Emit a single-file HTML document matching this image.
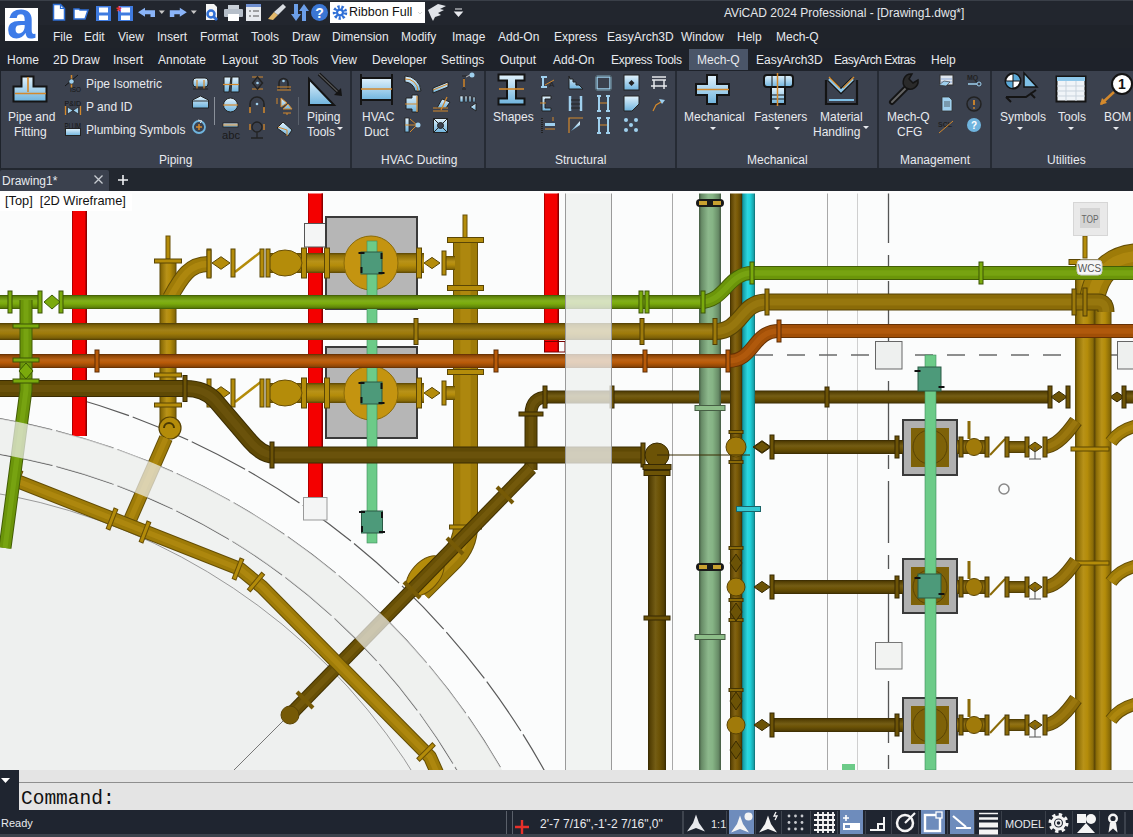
<!DOCTYPE html>
<html><head><meta charset="utf-8">
<style>
*{margin:0;padding:0;box-sizing:border-box}
html,body{width:1133px;height:837px;overflow:hidden;background:#1e232b;font-family:"Liberation Sans",sans-serif}
.a{position:absolute}
.t{position:absolute;white-space:nowrap;color:#e8eaee;font-size:12px;line-height:14px}
#title{left:0;top:0;width:1133px;height:48px;background:linear-gradient(#3a3f48 0,#3a3f48 1px,#22262e 1px,#22262e 25px,#1f232a 25px)}
#tabs{left:0;top:48px;width:1133px;height:23px;background:#1e222a}
#ribbon{left:1px;top:71px;width:1132px;height:97px;background:#3b414e}
.sep{position:absolute;top:71px;height:97px;width:2px;background:#262b34}
.pl{position:absolute;top:153px;color:#e6e8ec;font-size:12px;line-height:14px;white-space:nowrap}
.lbl{position:absolute;color:#eceef2;font-size:12px;line-height:15px;text-align:center;white-space:nowrap}
#doctabs{left:0;top:168px;width:1133px;height:23px;background:#22272f}
#canvas{left:0;top:191px;width:1133px;height:579px;background:#fdfdfd;overflow:hidden}
#cmd{left:19px;top:770px;width:1114px;height:40px;background:#e4e4e4}
#status{left:0;top:810px;width:1133px;height:27px;background:#1f2530}
</style></head><body>
<div id="title" class="a"></div>
<div id="tabs" class="a"></div>
<div id="ribbon" class="a"></div>
<div id="doctabs" class="a"></div>
<div id="canvas" class="a"></div>
<div id="cmd" class="a"></div>
<div id="status" class="a"></div>
<!--DRAW--><svg class="a" style="left:0;top:0" width="1133" height="837" viewBox="0 0 1133 837"><defs><linearGradient id="g0" x1="0" y1="0" x2="1" y2="0"><stop offset="0" stop-color="#5a4605"/><stop offset="0.12" stop-color="#8c6d07"/><stop offset="0.42" stop-color="#b89218"/><stop offset="0.62" stop-color="#b48c0a"/><stop offset="0.88" stop-color="#8c6d07"/><stop offset="1" stop-color="#5a4605"/></linearGradient><linearGradient id="g1" x1="0" y1="0" x2="0" y2="1"><stop offset="0" stop-color="#5a4605"/><stop offset="0.12" stop-color="#8c6d07"/><stop offset="0.42" stop-color="#b89218"/><stop offset="0.62" stop-color="#b48c0a"/><stop offset="0.88" stop-color="#8c6d07"/><stop offset="1" stop-color="#5a4605"/></linearGradient><linearGradient id="g2" x1="0" y1="0" x2="0" y2="1"><stop offset="0" stop-color="#362903"/><stop offset="0.12" stop-color="#544004"/><stop offset="0.42" stop-color="#745d14"/><stop offset="0.62" stop-color="#6c5306"/><stop offset="0.88" stop-color="#544004"/><stop offset="1" stop-color="#362903"/></linearGradient><linearGradient id="g3" x1="0" y1="0" x2="1" y2="0"><stop offset="0" stop-color="#435a42"/><stop offset="0.12" stop-color="#688c67"/><stop offset="0.42" stop-color="#8db88c"/><stop offset="0.62" stop-color="#86b485"/><stop offset="0.88" stop-color="#688c67"/><stop offset="1" stop-color="#435a42"/></linearGradient><linearGradient id="g4" x1="0" y1="0" x2="1" y2="0"><stop offset="0" stop-color="#3d2d03"/><stop offset="0.12" stop-color="#5f4604"/><stop offset="0.42" stop-color="#816314"/><stop offset="0.62" stop-color="#7a5a06"/><stop offset="0.88" stop-color="#5f4604"/><stop offset="1" stop-color="#3d2d03"/></linearGradient><linearGradient id="g5" x1="0" y1="0" x2="1" y2="0"><stop offset="0" stop-color="#0f696e"/><stop offset="0.12" stop-color="#18a4ab"/><stop offset="0.42" stop-color="#2cd5de"/><stop offset="0.62" stop-color="#1fd3dc"/><stop offset="0.88" stop-color="#18a4ab"/><stop offset="1" stop-color="#0f696e"/></linearGradient><linearGradient id="g6" x1="0" y1="0" x2="1" y2="0"><stop offset="0" stop-color="#362903"/><stop offset="0.12" stop-color="#544004"/><stop offset="0.42" stop-color="#745d14"/><stop offset="0.62" stop-color="#6c5306"/><stop offset="0.88" stop-color="#544004"/><stop offset="1" stop-color="#362903"/></linearGradient><linearGradient id="g7" x1="0" y1="0" x2="0" y2="1"><stop offset="0" stop-color="#453504"/><stop offset="0.12" stop-color="#6b5206"/><stop offset="0.42" stop-color="#917216"/><stop offset="0.62" stop-color="#8a6a08"/><stop offset="0.88" stop-color="#6b5206"/><stop offset="1" stop-color="#453504"/></linearGradient><linearGradient id="g8" x1="0" y1="0" x2="0" y2="1"><stop offset="0" stop-color="#3d5506"/><stop offset="0.12" stop-color="#5f8409"/><stop offset="0.42" stop-color="#81af1a"/><stop offset="0.62" stop-color="#7aaa0c"/><stop offset="0.88" stop-color="#5f8409"/><stop offset="1" stop-color="#3d5506"/></linearGradient><linearGradient id="g9" x1="0" y1="0" x2="0" y2="1"><stop offset="0" stop-color="#4e3d05"/><stop offset="0.12" stop-color="#7a5f07"/><stop offset="0.42" stop-color="#a28118"/><stop offset="0.62" stop-color="#9d7a0a"/><stop offset="0.88" stop-color="#7a5f07"/><stop offset="1" stop-color="#4e3d05"/></linearGradient><linearGradient id="g10" x1="0" y1="0" x2="0" y2="1"><stop offset="0" stop-color="#5c2d04"/><stop offset="0.12" stop-color="#8f4606"/><stop offset="0.42" stop-color="#bc6316"/><stop offset="0.62" stop-color="#b85a08"/><stop offset="0.88" stop-color="#8f4606"/><stop offset="1" stop-color="#5c2d04"/></linearGradient><clipPath id="cv"><rect x="0" y="193.5" width="1133" height="576.5"/></clipPath></defs><g clip-path="url(#cv)"><rect x="0" y="191" width="1133" height="579" fill="#fbfcfc"/><circle cx="-124" cy="1130" r="722" fill="#f0f2f1"/><circle cx="-110" cy="1102" r="618" fill="#eef0ef"/><g fill="none" stroke="#5a5a5a" stroke-width="1.2" stroke-dasharray="60 4"><circle cx="-140" cy="1151" r="783"/><circle cx="-124" cy="1130" r="722"/><circle cx="-110" cy="1102" r="657"/></g><circle cx="-110" cy="1102" r="618" fill="none" stroke="#9a9a9a" stroke-width="1"/><path d="M289 715L232 772" stroke="#777" stroke-width="1"/><path d="M672.5 191V770M827.5 191V770" stroke="#a8a8a8" stroke-width="1"/><path d="M857.5 191V770" stroke="#cfcfcf" stroke-width="1"/><path d="M888.5 191V770" stroke="#555" stroke-width="1.3" stroke-dasharray="62 12 14 12" stroke-dashoffset="10"/><path d="M755 355H1133" stroke="#6a6a6a" stroke-width="1.5" stroke-dasharray="18 14"/><rect x="875.5" y="341.5" width="26.5" height="27.5" fill="#eef0ef" stroke="#666" stroke-width="1.0"/><rect x="875.5" y="642.5" width="26.5" height="26.5" fill="#f2f3f2" stroke="#777" stroke-width="1.0"/><rect x="1117.5" y="341.5" width="22.5" height="27.5" fill="#eef0ef" stroke="#666" stroke-width="1.0"/><rect x="72.0" y="211.0" width="15.0" height="225.0" fill="#f40000"/><rect x="85.5" y="211.0" width="1.5" height="225.0" fill="#8a0000"/><rect x="72.0" y="211.0" width="1.0" height="225.0" fill="#b00000"/><rect x="308.0" y="191.0" width="15.0" height="306.0" fill="#f40000"/><rect x="321.5" y="191.0" width="1.5" height="306.0" fill="#8a0000"/><rect x="308.0" y="191.0" width="1.0" height="306.0" fill="#b00000"/><rect x="544.0" y="191.0" width="15.0" height="161.0" fill="#f40000"/><rect x="557.5" y="191.0" width="1.5" height="161.0" fill="#8a0000"/><rect x="544.0" y="191.0" width="1.0" height="161.0" fill="#b00000"/><rect x="544.5" y="341.5" width="20.5" height="10.5" fill="none" stroke="#700" stroke-width="1.0"/><rect x="304.5" y="223.5" width="21.5" height="23.5" fill="#f4f5f5" stroke="#555" stroke-width="1.0"/><rect x="303.5" y="497.5" width="23.5" height="22.5" fill="#f4f5f5" stroke="#999" stroke-width="1.0"/><rect x="326.0" y="217.0" width="91.0" height="92.0" fill="#b6b6b6" stroke="#3a3a3a" stroke-width="2.0"/><rect x="326.0" y="347.0" width="91.0" height="91.0" fill="#b6b6b6" stroke="#3a3a3a" stroke-width="2.0"/><rect x="159.5" y="262.0" width="17.0" height="163.0" fill="url(#g0)"/><rect x="166.0" y="236.0" width="4.0" height="23.0" fill="#b48c0a" stroke="#6a5006" stroke-width="1.0"/><rect x="154.5" y="259.0" width="27.0" height="4.0" fill="#b48c0a" stroke="#5a4605" stroke-width="1"/><rect x="154.5" y="373.0" width="27.0" height="4.0" fill="#b48c0a" stroke="#5a4605" stroke-width="1"/><rect x="154.5" y="403.0" width="27.0" height="4.0" fill="#b48c0a" stroke="#5a4605" stroke-width="1"/><circle cx="170" cy="428" r="11" fill="#b48c0a" stroke="#5a4404" stroke-width="1.2"/><path d="M164 428a5 5 0 1 1 10 0" fill="none" stroke="#4a3a04" stroke-width="2"/><path d="M166.0 438.0 L127.0 527.0" fill="none" stroke="#634d05" stroke-width="14.0" stroke-linejoin="round" stroke-linecap="butt"/><path d="M166.0 438.0 L127.0 527.0" fill="none" stroke="#9e7b08" stroke-width="12.0" stroke-linejoin="round" stroke-linecap="butt"/><path d="M166.0 438.0 L127.0 527.0" fill="none" stroke="#b79013" stroke-width="5.4" stroke-linejoin="round" stroke-linecap="butt" opacity=".6"/><path d="M465.5 240 L465.5 526 Q465.5 544 452 558 L420 590" fill="none" stroke="#634d05" stroke-width="25.0" stroke-linejoin="round" stroke-linecap="butt"/><path d="M465.5 240 L465.5 526 Q465.5 544 452 558 L420 590" fill="none" stroke="#9e7b08" stroke-width="23.0" stroke-linejoin="round" stroke-linecap="butt"/><path d="M465.5 240 L465.5 526 Q465.5 544 452 558 L420 590" fill="none" stroke="#b79013" stroke-width="10.3" stroke-linejoin="round" stroke-linecap="butt" opacity=".6"/><ellipse cx="425" cy="576" rx="24" ry="14" fill="#b48c0a" stroke="#6a5006" transform="rotate(-48 425 576)"/><rect x="463.0" y="215.0" width="4.0" height="23.0" fill="#b48c0a" stroke="#6a5006" stroke-width="1.0"/><rect x="447.5" y="237.5" width="36.0" height="5.0" fill="#b48c0a" stroke="#5a4605" stroke-width="1"/><rect x="447.5" y="285.5" width="36.0" height="5.0" fill="#b48c0a" stroke="#5a4605" stroke-width="1"/><rect x="447.5" y="369.5" width="36.0" height="5.0" fill="#b48c0a" stroke="#5a4605" stroke-width="1"/><rect x="449.5" y="525.0" width="32.0" height="4.0" fill="#b48c0a" stroke="#5a4605" stroke-width="1"/><rect x="268.0" y="253.0" width="156.0" height="20.0" fill="url(#g1)"/><rect x="444.0" y="256.0" width="11.0" height="14.0" fill="url(#g1)"/><rect x="301.5" y="248.0" width="5.0" height="30.0" fill="#b48c0a" stroke="#5a4605" stroke-width="1"/><rect x="324.5" y="248.0" width="5.0" height="30.0" fill="#b48c0a" stroke="#5a4605" stroke-width="1"/><rect x="416.5" y="248.0" width="5.0" height="30.0" fill="#b48c0a" stroke="#5a4605" stroke-width="1"/><ellipse cx="285" cy="263" rx="17" ry="13" fill="#b48c0a" stroke="#6a5006" stroke-width="1"/><rect x="266.0" y="249.0" width="4.0" height="28.0" fill="#b48c0a" stroke="#5a4605" stroke-width="1"/><path d="M235 272 L262 251" stroke="#b48c0a" stroke-width="2.5"/><rect x="231.0" y="249.0" width="4.0" height="28.0" fill="#b48c0a" stroke="#5a4605" stroke-width="1"/><rect x="260.0" y="249.0" width="4.0" height="28.0" fill="#b48c0a" stroke="#5a4605" stroke-width="1"/><path d="M212.0 263.0l9.0 -6.3l9.0 6.3l-9.0 6.3z" fill="#b48c0a" stroke="#5a4605" stroke-width="1"/><rect x="207.0" y="249.0" width="4.0" height="28.0" fill="#b48c0a" stroke="#5a4605" stroke-width="1"/><path d="M424.0 263.0l8.0 -5.6l8.0 5.6l-8.0 5.6z" fill="#b48c0a" stroke="#5a4605" stroke-width="1"/><rect x="442.0" y="251.0" width="4.0" height="24.0" fill="#b48c0a" stroke="#5a4605" stroke-width="1"/><circle cx="371" cy="263" r="27" fill="#c49410" stroke="#8a6a08" stroke-width="1"/><rect x="268.0" y="383.0" width="156.0" height="20.0" fill="url(#g1)"/><rect x="444.0" y="386.0" width="11.0" height="14.0" fill="url(#g1)"/><rect x="301.5" y="378.0" width="5.0" height="30.0" fill="#b48c0a" stroke="#5a4605" stroke-width="1"/><rect x="324.5" y="378.0" width="5.0" height="30.0" fill="#b48c0a" stroke="#5a4605" stroke-width="1"/><rect x="416.5" y="378.0" width="5.0" height="30.0" fill="#b48c0a" stroke="#5a4605" stroke-width="1"/><ellipse cx="285" cy="393" rx="17" ry="13" fill="#b48c0a" stroke="#6a5006" stroke-width="1"/><rect x="266.0" y="379.0" width="4.0" height="28.0" fill="#b48c0a" stroke="#5a4605" stroke-width="1"/><path d="M235 402 L262 381" stroke="#b48c0a" stroke-width="2.5"/><rect x="231.0" y="379.0" width="4.0" height="28.0" fill="#b48c0a" stroke="#5a4605" stroke-width="1"/><rect x="260.0" y="379.0" width="4.0" height="28.0" fill="#b48c0a" stroke="#5a4605" stroke-width="1"/><path d="M212.0 393.0l9.0 -6.3l9.0 6.3l-9.0 6.3z" fill="#b48c0a" stroke="#5a4605" stroke-width="1"/><rect x="207.0" y="379.0" width="4.0" height="28.0" fill="#b48c0a" stroke="#5a4605" stroke-width="1"/><path d="M424.0 393.0l8.0 -5.6l8.0 5.6l-8.0 5.6z" fill="#b48c0a" stroke="#5a4605" stroke-width="1"/><rect x="442.0" y="381.0" width="4.0" height="24.0" fill="#b48c0a" stroke="#5a4605" stroke-width="1"/><circle cx="371" cy="393" r="27" fill="#c49410" stroke="#8a6a08" stroke-width="1"/><path d="M170 298 C182 276 190 264 208 264" fill="none" stroke="#634d05" stroke-width="16.0" stroke-linejoin="round" stroke-linecap="butt"/><path d="M170 298 C182 276 190 264 208 264" fill="none" stroke="#9e7b08" stroke-width="14.0" stroke-linejoin="round" stroke-linecap="butt"/><path d="M170 298 C182 276 190 264 208 264" fill="none" stroke="#b79013" stroke-width="6.3" stroke-linejoin="round" stroke-linecap="butt" opacity=".6"/><rect x="207.0" y="250.0" width="4.0" height="28.0" fill="#b48c0a" stroke="#5a4605" stroke-width="1"/><rect x="367.0" y="241.0" width="10.0" height="302.0" fill="#6ccb88" stroke="#3f8a5a" stroke-width="0.6"/><rect x="361.0" y="252.0" width="21.0" height="22.0" fill="#4d9a7a" stroke="#2a5a44" stroke-width="1.0"/><path d="M358.5 253.0h6M378.5 273.0h6M361.5 267.0v6M381.5 253.0v6" stroke="#111" stroke-width="2"/><rect x="361.0" y="382.0" width="21.0" height="22.0" fill="#4d9a7a" stroke="#2a5a44" stroke-width="1.0"/><path d="M358.5 383.0h6M378.5 403.0h6M361.5 397.0v6M381.5 383.0v6" stroke="#111" stroke-width="2"/><rect x="361.5" y="511.0" width="21.0" height="22.0" fill="#4d9a7a" stroke="#2a5a44" stroke-width="1.0"/><path d="M359.0 512.0h6M379.0 532.0h6M362.0 526.0v6M382.0 512.0v6" stroke="#111" stroke-width="2"/><rect x="545.0" y="390.5" width="505.0" height="13.0" fill="url(#g2)"/><path d="M548 397 Q531 397 531 414 L531 470" fill="none" stroke="#3b2d03" stroke-width="13.0" stroke-linejoin="round" stroke-linecap="butt"/><path d="M548 397 Q531 397 531 414 L531 470" fill="none" stroke="#5f4905" stroke-width="11.0" stroke-linejoin="round" stroke-linecap="butt"/><path d="M548 397 Q531 397 531 414 L531 470" fill="none" stroke="#71590f" stroke-width="5.0" stroke-linejoin="round" stroke-linecap="butt" opacity=".6"/><rect x="543.0" y="386.0" width="4.0" height="22.0" fill="#6c5306" stroke="#362903" stroke-width="1"/><rect x="519.0" y="412.0" width="24.0" height="4.0" fill="#6c5306" stroke="#362903" stroke-width="1"/><rect x="610.0" y="386.0" width="4.0" height="22.0" fill="#6c5306" stroke="#362903" stroke-width="1"/><rect x="1048.0" y="386.0" width="4.0" height="22.0" fill="#6c5306" stroke="#362903" stroke-width="1"/><path d="M1051.0 397.0l8.0 -5.6l8.0 5.6l-8.0 5.6z" fill="#6c5306" stroke="#362903" stroke-width="1"/><rect x="1066.0" y="386.0" width="4.0" height="22.0" fill="#6c5306" stroke="#362903" stroke-width="1"/><path d="M1110.0 397.0l7.0 -4.9l7.0 4.9l-7.0 4.9z" fill="#6c5306" stroke="#362903" stroke-width="1"/><rect x="1124.0" y="390.5" width="9.0" height="13.0" fill="url(#g2)"/><rect x="1122.0" y="386.0" width="4.0" height="22.0" fill="#6c5306" stroke="#362903" stroke-width="1"/><rect x="825.0" y="387.0" width="4.0" height="20.0" fill="#6c5306" stroke="#362903" stroke-width="1"/><rect x="699.0" y="191.0" width="22.0" height="579.0" fill="url(#g3)"/><rect x="696" y="199" width="28" height="8" rx="4" fill="#1a1a1a"/><rect x="699" y="201" width="8" height="4" fill="#c8a030"/><rect x="713" y="201" width="8" height="4" fill="#c8a030"/><rect x="695.0" y="405.5" width="30.0" height="5.0" fill="#8dbd88" stroke="#465e44" stroke-width="1"/><rect x="695.0" y="634.5" width="30.0" height="5.0" fill="#8dbd88" stroke="#465e44" stroke-width="1"/><rect x="696" y="563" width="28" height="8" rx="4" fill="#1a1a1a"/><rect x="699" y="565" width="8" height="4" fill="#c8a030"/><rect x="713" y="565" width="8" height="4" fill="#c8a030"/><rect x="730.0" y="191.0" width="12.0" height="579.0" fill="url(#g4)"/><rect x="742.0" y="191.0" width="13.0" height="579.0" fill="url(#g5)"/><rect x="736.5" y="506.5" width="24.0" height="5.0" fill="#35c8d0" stroke="#1a6468" stroke-width="1"/><circle cx="736" cy="447" r="10" fill="#a07a0a" stroke="#5a4404"/><rect x="729.0" y="430.5" width="14.0" height="3.0" fill="#8a6a08" stroke="#453504" stroke-width="1"/><rect x="729.0" y="460.5" width="14.0" height="3.0" fill="#8a6a08" stroke="#453504" stroke-width="1"/><rect x="729.0" y="546.5" width="14.0" height="3.0" fill="#8a6a08" stroke="#453504" stroke-width="1"/><rect x="729.0" y="598.5" width="14.0" height="3.0" fill="#8a6a08" stroke="#453504" stroke-width="1"/><rect x="729.0" y="618.5" width="14.0" height="3.0" fill="#8a6a08" stroke="#453504" stroke-width="1"/><rect x="729.0" y="688.5" width="14.0" height="3.0" fill="#8a6a08" stroke="#453504" stroke-width="1"/><path d="M753.0 447.0l9.0 -6.3l9.0 6.3l-9.0 6.3z" fill="#765a06" stroke="#3b2d03" stroke-width="1"/><circle cx="736" cy="587" r="9" fill="#a07a0a" stroke="#5a4404"/><path d="M736 554l6 9-6 9-6-9z" fill="#6c5306" stroke="#3a2c02"/><path d="M736 603l6 9-6 9-6-9z" fill="#6c5306" stroke="#3a2c02"/><circle cx="736" cy="725" r="9" fill="#a07a0a" stroke="#5a4404"/><path d="M736 692l6 9-6 9-6-9z" fill="#6c5306" stroke="#3a2c02"/><path d="M736 741l6 9-6 9-6-9z" fill="#6c5306" stroke="#3a2c02"/><rect x="648.0" y="462.0" width="18.0" height="308.0" fill="url(#g6)"/><rect x="644.0" y="470.5" width="26.0" height="5.0" fill="#6c5306" stroke="#362903" stroke-width="1"/><rect x="644.0" y="616.0" width="26.0" height="4.0" fill="#6c5306" stroke="#362903" stroke-width="1"/><rect x="1075.0" y="260.0" width="20.0" height="510.0" fill="url(#g0)"/><rect x="1094.5" y="300.0" width="17.0" height="470.0" fill="url(#g0)"/><rect x="1083.0" y="236.0" width="4.0" height="22.0" fill="#b48c0a" stroke="#6a5006" stroke-width="1.0"/><rect x="1069.0" y="259.5" width="32.0" height="5.0" fill="#b48c0a" stroke="#5a4605" stroke-width="1"/><rect x="1071.0" y="447.0" width="38.0" height="4.0" fill="#b48c0a" stroke="#5a4605" stroke-width="1"/><rect x="1071.0" y="561.0" width="38.0" height="4.0" fill="#b48c0a" stroke="#5a4605" stroke-width="1"/><path d="M1092 300 Q1098 258 1140 256" fill="none" stroke="#634d05" stroke-width="26.0" stroke-linejoin="round" stroke-linecap="butt"/><path d="M1092 300 Q1098 258 1140 256" fill="none" stroke="#9e7b08" stroke-width="24.0" stroke-linejoin="round" stroke-linecap="butt"/><path d="M1092 300 Q1098 258 1140 256" fill="none" stroke="#b79013" stroke-width="10.8" stroke-linejoin="round" stroke-linecap="butt" opacity=".6"/><rect x="903.0" y="420.0" width="54.0" height="55.0" fill="#b0b0b0" stroke="#3a3a3a" stroke-width="2.0"/><rect x="911.0" y="428.0" width="38.0" height="39.0" fill="#7e6208"/><circle cx="930" cy="447" r="17" fill="none" stroke="#5a4404" stroke-width="1"/><rect x="771.0" y="440.0" width="132.0" height="14.0" fill="url(#g2)"/><rect x="770.0" y="435.0" width="4.0" height="24.0" fill="#6c5306" stroke="#362903" stroke-width="1"/><rect x="895.0" y="436.0" width="4.0" height="22.0" fill="#6c5306" stroke="#362903" stroke-width="1"/><path d="M754.0 447.0l8.0 -5.6l8.0 5.6l-8.0 5.6z" fill="#6c5306" stroke="#362903" stroke-width="1"/><rect x="957.0" y="440.0" width="30.0" height="14.0" fill="url(#g7)"/><rect x="959.0" y="437.0" width="4.0" height="20.0" fill="#8a6a08" stroke="#453504" stroke-width="1"/><rect x="967.5" y="421.0" width="3.0" height="18.0" fill="#8a6a08"/><circle cx="974" cy="447" r="8.5" fill="#a07a0a" stroke="#5a4404"/><rect x="985.0" y="437.0" width="4.0" height="20.0" fill="#8a6a08" stroke="#453504" stroke-width="1"/><path d="M990 455 L1005 439" stroke="#8a6a08" stroke-width="2"/><rect x="1007.0" y="441.0" width="20.0" height="12.0" fill="url(#g7)"/><rect x="1005.0" y="437.0" width="4.0" height="20.0" fill="#8a6a08" stroke="#453504" stroke-width="1"/><rect x="1025.0" y="437.0" width="4.0" height="20.0" fill="#8a6a08" stroke="#453504" stroke-width="1"/><path d="M1028.0 447.0l7.0 -4.9l7.0 4.9l-7.0 4.9z" fill="#8a6a08" stroke="#453504" stroke-width="1"/><path d="M1035 447v12M1029 459h12" stroke="#555" stroke-width="1"/><path d="M1044 447 Q1058 447 1076 421" fill="none" stroke="#584305" stroke-width="14.0" stroke-linejoin="round" stroke-linecap="butt"/><path d="M1044 447 Q1058 447 1076 421" fill="none" stroke="#8c6b08" stroke-width="12.0" stroke-linejoin="round" stroke-linecap="butt"/><path d="M1044 447 Q1058 447 1076 421" fill="none" stroke="#a37f13" stroke-width="5.4" stroke-linejoin="round" stroke-linecap="butt" opacity=".6"/><rect x="1043.0" y="437.0" width="4.0" height="20.0" fill="#8a6a08" stroke="#453504" stroke-width="1"/><rect x="903.0" y="559.0" width="54.0" height="54.0" fill="#b0b0b0" stroke="#3a3a3a" stroke-width="2.0"/><rect x="911.0" y="567.0" width="38.0" height="38.0" fill="#7e6208"/><circle cx="930" cy="587" r="17" fill="none" stroke="#5a4404" stroke-width="1"/><rect x="771.0" y="580.0" width="132.0" height="14.0" fill="url(#g2)"/><rect x="770.0" y="575.0" width="4.0" height="24.0" fill="#6c5306" stroke="#362903" stroke-width="1"/><rect x="895.0" y="576.0" width="4.0" height="22.0" fill="#6c5306" stroke="#362903" stroke-width="1"/><path d="M754.0 587.0l8.0 -5.6l8.0 5.6l-8.0 5.6z" fill="#6c5306" stroke="#362903" stroke-width="1"/><rect x="957.0" y="580.0" width="30.0" height="14.0" fill="url(#g7)"/><rect x="959.0" y="577.0" width="4.0" height="20.0" fill="#8a6a08" stroke="#453504" stroke-width="1"/><rect x="967.5" y="561.0" width="3.0" height="18.0" fill="#8a6a08"/><circle cx="974" cy="587" r="8.5" fill="#a07a0a" stroke="#5a4404"/><rect x="985.0" y="577.0" width="4.0" height="20.0" fill="#8a6a08" stroke="#453504" stroke-width="1"/><path d="M990 595 L1005 579" stroke="#8a6a08" stroke-width="2"/><rect x="1007.0" y="581.0" width="20.0" height="12.0" fill="url(#g7)"/><rect x="1005.0" y="577.0" width="4.0" height="20.0" fill="#8a6a08" stroke="#453504" stroke-width="1"/><rect x="1025.0" y="577.0" width="4.0" height="20.0" fill="#8a6a08" stroke="#453504" stroke-width="1"/><path d="M1028.0 587.0l7.0 -4.9l7.0 4.9l-7.0 4.9z" fill="#8a6a08" stroke="#453504" stroke-width="1"/><path d="M1035 587v12M1029 599h12" stroke="#555" stroke-width="1"/><path d="M1044 587 Q1058 587 1076 561" fill="none" stroke="#584305" stroke-width="14.0" stroke-linejoin="round" stroke-linecap="butt"/><path d="M1044 587 Q1058 587 1076 561" fill="none" stroke="#8c6b08" stroke-width="12.0" stroke-linejoin="round" stroke-linecap="butt"/><path d="M1044 587 Q1058 587 1076 561" fill="none" stroke="#a37f13" stroke-width="5.4" stroke-linejoin="round" stroke-linecap="butt" opacity=".6"/><rect x="1043.0" y="577.0" width="4.0" height="20.0" fill="#8a6a08" stroke="#453504" stroke-width="1"/><rect x="903.0" y="698.0" width="54.0" height="54.0" fill="#b0b0b0" stroke="#3a3a3a" stroke-width="2.0"/><rect x="911.0" y="706.0" width="38.0" height="38.0" fill="#7e6208"/><circle cx="930" cy="725" r="17" fill="none" stroke="#5a4404" stroke-width="1"/><rect x="771.0" y="718.0" width="132.0" height="14.0" fill="url(#g2)"/><rect x="770.0" y="713.0" width="4.0" height="24.0" fill="#6c5306" stroke="#362903" stroke-width="1"/><rect x="895.0" y="714.0" width="4.0" height="22.0" fill="#6c5306" stroke="#362903" stroke-width="1"/><path d="M754.0 725.0l8.0 -5.6l8.0 5.6l-8.0 5.6z" fill="#6c5306" stroke="#362903" stroke-width="1"/><rect x="957.0" y="718.0" width="30.0" height="14.0" fill="url(#g7)"/><rect x="959.0" y="715.0" width="4.0" height="20.0" fill="#8a6a08" stroke="#453504" stroke-width="1"/><rect x="967.5" y="699.0" width="3.0" height="18.0" fill="#8a6a08"/><circle cx="974" cy="725" r="8.5" fill="#a07a0a" stroke="#5a4404"/><rect x="985.0" y="715.0" width="4.0" height="20.0" fill="#8a6a08" stroke="#453504" stroke-width="1"/><path d="M990 733 L1005 717" stroke="#8a6a08" stroke-width="2"/><rect x="1007.0" y="719.0" width="20.0" height="12.0" fill="url(#g7)"/><rect x="1005.0" y="715.0" width="4.0" height="20.0" fill="#8a6a08" stroke="#453504" stroke-width="1"/><rect x="1025.0" y="715.0" width="4.0" height="20.0" fill="#8a6a08" stroke="#453504" stroke-width="1"/><path d="M1028.0 725.0l7.0 -4.9l7.0 4.9l-7.0 4.9z" fill="#8a6a08" stroke="#453504" stroke-width="1"/><path d="M1035 725v12M1029 737h12" stroke="#555" stroke-width="1"/><path d="M1044 725 Q1058 725 1076 699" fill="none" stroke="#584305" stroke-width="14.0" stroke-linejoin="round" stroke-linecap="butt"/><path d="M1044 725 Q1058 725 1076 699" fill="none" stroke="#8c6b08" stroke-width="12.0" stroke-linejoin="round" stroke-linecap="butt"/><path d="M1044 725 Q1058 725 1076 699" fill="none" stroke="#a37f13" stroke-width="5.4" stroke-linejoin="round" stroke-linecap="butt" opacity=".6"/><rect x="1043.0" y="715.0" width="4.0" height="20.0" fill="#8a6a08" stroke="#453504" stroke-width="1"/><path d="M1111 442 Q1120 429 1140 425" fill="none" stroke="#634d05" stroke-width="13.0" stroke-linejoin="round" stroke-linecap="butt"/><path d="M1111 442 Q1120 429 1140 425" fill="none" stroke="#9e7b08" stroke-width="11.0" stroke-linejoin="round" stroke-linecap="butt"/><path d="M1111 442 Q1120 429 1140 425" fill="none" stroke="#b79013" stroke-width="5.0" stroke-linejoin="round" stroke-linecap="butt" opacity=".6"/><path d="M1111 582 Q1120 569 1140 565" fill="none" stroke="#634d05" stroke-width="13.0" stroke-linejoin="round" stroke-linecap="butt"/><path d="M1111 582 Q1120 569 1140 565" fill="none" stroke="#9e7b08" stroke-width="11.0" stroke-linejoin="round" stroke-linecap="butt"/><path d="M1111 582 Q1120 569 1140 565" fill="none" stroke="#b79013" stroke-width="5.0" stroke-linejoin="round" stroke-linecap="butt" opacity=".6"/><path d="M1111 720 Q1120 707 1140 703" fill="none" stroke="#634d05" stroke-width="13.0" stroke-linejoin="round" stroke-linecap="butt"/><path d="M1111 720 Q1120 707 1140 703" fill="none" stroke="#9e7b08" stroke-width="11.0" stroke-linejoin="round" stroke-linecap="butt"/><path d="M1111 720 Q1120 707 1140 703" fill="none" stroke="#b79013" stroke-width="5.0" stroke-linejoin="round" stroke-linecap="butt" opacity=".6"/><rect x="925.0" y="355.0" width="11.0" height="415.0" fill="#6ccb88" stroke="#3f8a5a" stroke-width="0.6"/><rect x="918.0" y="367.0" width="23.0" height="24.0" fill="#4d9a7a" stroke="#2a5a44" stroke-width="1.0"/><path d="M914.5 371.0h6M938.5 387.0h6" stroke="#111" stroke-width="2"/><rect x="918.0" y="574.0" width="23.0" height="24.0" fill="#4d9a7a" stroke="#2a5a44" stroke-width="1.0"/><path d="M914.5 578.0h6M938.5 594.0h6" stroke="#111" stroke-width="2"/><circle cx="1004" cy="489" r="5" fill="none" stroke="#888" stroke-width="1.5"/><path d="M0 388.5 L186 388.5 Q204 388.5 215 400 L250 441 Q262 455 274 455 L645 455" fill="none" stroke="#3b2d03" stroke-width="17.0" stroke-linejoin="round" stroke-linecap="butt"/><path d="M0 388.5 L186 388.5 Q204 388.5 215 400 L250 441 Q262 455 274 455 L645 455" fill="none" stroke="#5f4905" stroke-width="15.0" stroke-linejoin="round" stroke-linecap="butt"/><path d="M0 388.5 L186 388.5 Q204 388.5 215 400 L250 441 Q262 455 274 455 L645 455" fill="none" stroke="#71590f" stroke-width="6.8" stroke-linejoin="round" stroke-linecap="butt" opacity=".6"/><rect x="183.0" y="375.5" width="4.0" height="26.0" fill="#6c5306" stroke="#362903" stroke-width="1"/><rect x="270.0" y="442.0" width="4.0" height="26.0" fill="#6c5306" stroke="#362903" stroke-width="1"/><rect x="641.0" y="443.0" width="4.0" height="24.0" fill="#6c5306" stroke="#362903" stroke-width="1"/><circle cx="657" cy="455" r="12" fill="#6c5306" stroke="#3a2c02"/><path d="M657 455H750" stroke="#3a2c02" stroke-width="1.2"/><rect x="643.0" y="464.5" width="28.0" height="5.0" fill="#6c5306" stroke="#362903" stroke-width="1"/><path d="M531.0 468.0 L290.0 715.0" fill="none" stroke="#403103" stroke-width="14.0" stroke-linejoin="round" stroke-linecap="butt"/><path d="M531.0 468.0 L290.0 715.0" fill="none" stroke="#674f05" stroke-width="12.0" stroke-linejoin="round" stroke-linecap="butt"/><path d="M531.0 468.0 L290.0 715.0" fill="none" stroke="#7b600f" stroke-width="5.4" stroke-linejoin="round" stroke-linecap="butt" opacity=".6"/><circle cx="290" cy="715" r="9" fill="#765a06" stroke="#5a4404"/><path d="M497.0 487.0l16 16" stroke="#765a06" stroke-width="4"/><path d="M447.0 538.0l16 16" stroke="#765a06" stroke-width="4"/><path d="M404.0 582.0l16 16" stroke="#765a06" stroke-width="4"/><path d="M297.0 692.0l16 16" stroke="#765a06" stroke-width="4"/><path d="M17.0 481.0 L240.0 569.0 L262.0 587.0 L430.0 757.0 L438.0 775.0" fill="none" stroke="#634d05" stroke-width="14.0" stroke-linejoin="round" stroke-linecap="butt"/><path d="M17.0 481.0 L240.0 569.0 L262.0 587.0 L430.0 757.0 L438.0 775.0" fill="none" stroke="#9e7b08" stroke-width="12.0" stroke-linejoin="round" stroke-linecap="butt"/><path d="M17.0 481.0 L240.0 569.0 L262.0 587.0 L430.0 757.0 L438.0 775.0" fill="none" stroke="#b79013" stroke-width="5.4" stroke-linejoin="round" stroke-linecap="butt" opacity=".6"/><rect x="15.0" y="470.0" width="4" height="22" fill="#b48c0a" stroke="#6a5006" transform="rotate(21 17.0 481.0)"/><rect x="110.0" y="508.0" width="4" height="22" fill="#b48c0a" stroke="#6a5006" transform="rotate(21 112.0 519.0)"/><rect x="143.0" y="521.0" width="4" height="22" fill="#b48c0a" stroke="#6a5006" transform="rotate(21 145.0 532.0)"/><rect x="236.0" y="558.0" width="4" height="22" fill="#b48c0a" stroke="#6a5006" transform="rotate(21 238.0 569.0)"/><rect x="254.0" y="571.0" width="4" height="22" fill="#b48c0a" stroke="#6a5006" transform="rotate(40 256.0 582.0)"/><rect x="424.0" y="741.0" width="4" height="22" fill="#b48c0a" stroke="#6a5006" transform="rotate(45 426.0 752.0)"/><rect x="0.0" y="295.0" width="42.0" height="14.0" fill="url(#g8)"/><rect x="60.0" y="295.0" width="640.0" height="14.0" fill="url(#g8)"/><path d="M700 302 C725 302 728 273 752 273 L1133 273" fill="none" stroke="#435d06" stroke-width="14.0" stroke-linejoin="round" stroke-linecap="butt"/><path d="M700 302 C725 302 728 273 752 273 L1133 273" fill="none" stroke="#6b950a" stroke-width="12.0" stroke-linejoin="round" stroke-linecap="butt"/><path d="M700 302 C725 302 728 273 752 273 L1133 273" fill="none" stroke="#7fad15" stroke-width="5.4" stroke-linejoin="round" stroke-linecap="butt" opacity=".6"/><rect x="8.0" y="291.0" width="4.0" height="22.0" fill="#7aaa0c" stroke="#3d5506" stroke-width="1"/><rect x="38.0" y="291.0" width="4.0" height="22.0" fill="#7aaa0c" stroke="#3d5506" stroke-width="1"/><rect x="59.0" y="291.0" width="4.0" height="22.0" fill="#7aaa0c" stroke="#3d5506" stroke-width="1"/><rect x="639.0" y="291.0" width="4.0" height="22.0" fill="#7aaa0c" stroke="#3d5506" stroke-width="1"/><rect x="645.0" y="291.0" width="4.0" height="22.0" fill="#7aaa0c" stroke="#3d5506" stroke-width="1"/><rect x="701.0" y="291.0" width="4.0" height="22.0" fill="#7aaa0c" stroke="#3d5506" stroke-width="1"/><rect x="750.0" y="262.0" width="4.0" height="22.0" fill="#7aaa0c" stroke="#3d5506" stroke-width="1"/><rect x="979.0" y="262.0" width="4.0" height="22.0" fill="#7aaa0c" stroke="#3d5506" stroke-width="1"/><path d="M44 302l8-7 8 7-8 7z" fill="#7aaa0c" stroke="#3a5a04"/><rect x="0.0" y="323.0" width="717.0" height="17.0" fill="url(#g9)"/><path d="M715 331.5 C742 331.5 740 302 767 302 L1098 302 Q1106 302 1106 312" fill="none" stroke="#564305" stroke-width="17.0" stroke-linejoin="round" stroke-linecap="butt"/><path d="M715 331.5 C742 331.5 740 302 767 302 L1098 302 Q1106 302 1106 312" fill="none" stroke="#8a6b08" stroke-width="15.0" stroke-linejoin="round" stroke-linecap="butt"/><path d="M715 331.5 C742 331.5 740 302 767 302 L1098 302 Q1106 302 1106 312" fill="none" stroke="#a07f13" stroke-width="6.8" stroke-linejoin="round" stroke-linecap="butt" opacity=".6"/><rect x="640.0" y="318.5" width="4.0" height="26.0" fill="#9d7a0a" stroke="#4e3d05" stroke-width="1"/><rect x="713.0" y="318.5" width="4.0" height="26.0" fill="#9d7a0a" stroke="#4e3d05" stroke-width="1"/><rect x="765.0" y="289.0" width="4.0" height="26.0" fill="#9d7a0a" stroke="#4e3d05" stroke-width="1"/><rect x="1072.0" y="289.0" width="4.0" height="26.0" fill="#9d7a0a" stroke="#4e3d05" stroke-width="1"/><rect x="414.0" y="318.5" width="4.0" height="26.0" fill="#9d7a0a" stroke="#4e3d05" stroke-width="1"/><rect x="1083.0" y="288.0" width="4.0" height="28.0" fill="#9d7a0a" stroke="#4e3d05" stroke-width="1"/><rect x="0.0" y="354.0" width="730.0" height="14.0" fill="url(#g10)"/><path d="M728 361 C755 361 752 331 779 331 L1133 331" fill="none" stroke="#653104" stroke-width="14.0" stroke-linejoin="round" stroke-linecap="butt"/><path d="M728 361 C755 361 752 331 779 331 L1133 331" fill="none" stroke="#a14f07" stroke-width="12.0" stroke-linejoin="round" stroke-linecap="butt"/><path d="M728 361 C755 361 752 331 779 331 L1133 331" fill="none" stroke="#ba6011" stroke-width="5.4" stroke-linejoin="round" stroke-linecap="butt" opacity=".6"/><rect x="95.0" y="350.0" width="4.0" height="22.0" fill="#b85a08" stroke="#5c2d04" stroke-width="1"/><rect x="643.0" y="350.0" width="4.0" height="22.0" fill="#b85a08" stroke="#5c2d04" stroke-width="1"/><rect x="726.0" y="350.0" width="4.0" height="22.0" fill="#b85a08" stroke="#5c2d04" stroke-width="1"/><rect x="777.0" y="320.0" width="4.0" height="22.0" fill="#b85a08" stroke="#5c2d04" stroke-width="1"/><rect x="494.0" y="350.0" width="4.0" height="22.0" fill="#b85a08" stroke="#5c2d04" stroke-width="1"/><path d="M26.0 300.0 L26.0 390.0 L5.0 548.0" fill="none" stroke="#435d06" stroke-width="13.0" stroke-linejoin="round" stroke-linecap="butt"/><path d="M26.0 300.0 L26.0 390.0 L5.0 548.0" fill="none" stroke="#6b950a" stroke-width="11.0" stroke-linejoin="round" stroke-linecap="butt"/><path d="M26.0 300.0 L26.0 390.0 L5.0 548.0" fill="none" stroke="#7fad15" stroke-width="5.0" stroke-linejoin="round" stroke-linecap="butt" opacity=".6"/><rect x="13.0" y="324.0" width="26.0" height="4.0" fill="#7aaa0c" stroke="#3d5506" stroke-width="1"/><rect x="13.0" y="358.0" width="26.0" height="4.0" fill="#7aaa0c" stroke="#3d5506" stroke-width="1"/><path d="M19 371l7-8 7 8-7 8z" fill="#7aaa0c" stroke="#3a5a04"/><rect x="13.0" y="379.0" width="26.0" height="4.0" fill="#7aaa0c" stroke="#3d5506" stroke-width="1"/><rect x="566" y="191" width="45" height="579" fill="#eef0ee" opacity=".78"/><path d="M565.5 191V770M611.5 191V770" stroke="#9a9a9a" stroke-width="1"/><path d="M-846 1130a722 722 0 1 0 1444 0a722 722 0 1 0 -1444 0z M-767 1102a657 657 0 1 0 1314 0a657 657 0 1 0 -1314 0z" fill="#eef0ef" opacity=".72" fill-rule="evenodd"/><rect x="842.0" y="764.0" width="13.0" height="6.0" fill="#6ccb88"/><rect x="0.0" y="191.0" width="132.0" height="20.0" fill="#ffffff"/><rect x="1073.5" y="202.5" width="34" height="33" fill="#e9e9e9" stroke="#d6d6d6"/><rect x="1080" y="208" width="20" height="20" fill="#d4d4d4"/><text x="1081.5" y="223" font-size="11" fill="#666" font-family="Liberation Sans" textLength="17" lengthAdjust="spacingAndGlyphs">TOP</text><rect x="1077" y="260" width="25" height="15" rx="4" fill="#f6f6f6" stroke="#ccc"/><text x="1089.5" y="271.5" font-size="10" fill="#555" text-anchor="middle" font-family="Liberation Sans">WCS</text></g></svg><div class="t" style="left:5px;top:194px;color:#111;font-size:12.8px">[Top]&nbsp; [2D Wireframe]</div><!--/DRAW-->
<!--TITLE-->
<!-- logo -->
<div class="a" style="left:5px;top:8px;width:33px;height:33px;background:#fff"></div>
<svg class="a" style="left:0;top:0" width="44" height="44"><text x="21" y="37.5" font-size="51" font-weight="bold" fill="#3d7be8" text-anchor="middle" font-family="Liberation Sans">a</text></svg>
<!-- QAT icons -->
<svg class="a" style="left:0;top:0" width="470" height="26">
 <g fill="#fff" stroke="#2f6fd6" stroke-width="1.5">
  <path d="M53.5 4.5h7l4 4v11.5h-11z"/>
 </g>
 <path d="M60.5 4.5v4h4" fill="none" stroke="#2f6fd6" stroke-width="1.2"/>
 <path d="M74 9h5l1 1h8l-3 9h-11z" fill="#fff" stroke="#2f6fd6" stroke-width="1.5"/>
 <rect x="96" y="6" width="15" height="15" fill="#3f7be0"/><rect x="99" y="7.5" width="9" height="5" fill="#fff"/><rect x="99" y="15.5" width="9" height="4.5" fill="#fff"/>
 <rect x="118" y="6" width="15" height="15" fill="#3f7be0"/><rect x="121" y="7.5" width="9" height="5" fill="#fff"/><rect x="121" y="15.5" width="9" height="4.5" fill="#fff"/>
 <text x="116" y="16" fill="#e8302a" font-size="14" font-weight="bold" font-family="Liberation Sans">*</text>
 <path d="M138 12.2l7-4.5v2.6h10v6.8h-4.5v-2.8h-5.5v2.5z" fill="#8ab4f8"/>
 <path d="M158.8 10.5h6l-3 3.5z" fill="#c8c8c8"/>
 <path d="M186.8 12.2l-7-4.5v2.6h-10v6.8h4.5v-2.8h5.5v2.5z" fill="#8ab4f8"/>
 <path d="M190.8 10.5h6l-3 3.5z" fill="#c8c8c8"/>
 <path d="M206 4h8l3 3v13h-11z" fill="#f4f4f4"/><circle cx="211" cy="14" r="3.5" fill="none" stroke="#2f6fd6" stroke-width="2.5"/><path d="M213 16l4 4" stroke="#2f6fd6" stroke-width="3"/>
 <rect x="228" y="5" width="11" height="5" fill="#c9d0d8"/><rect x="224" y="9" width="19" height="8" rx="1" fill="#b5bec9"/><rect x="228" y="14" width="11" height="7" fill="#fff"/>
 <rect x="246" y="4" width="15" height="17" fill="#e8ebef"/><rect x="246" y="4" width="15" height="3" fill="#6f8fd0"/><path d="M249 11h2M253 11h6M249 16h2M253 16h6" stroke="#555" stroke-width="1"/>
 <path d="M268 19l6-7 4 3-5 5z" fill="#e2b86a"/><path d="M274 12l9-8 3 3-8 8z" fill="#d9dde2"/>
 <path d="M294 4v10h-3l5 7 5-7h-3v-10z" fill="#6b9ee8"/><path d="M302 21v-10h-3l5-7 5 7h-3v10z" fill="#6b9ee8"/>
 <circle cx="319.5" cy="12.5" r="8.5" fill="#3b76d4"/>
 <text x="319.5" y="17.5" fill="#fff" font-size="14" font-weight="bold" text-anchor="middle" font-family="Liberation Sans">?</text>
 <rect x="330" y="2" width="95" height="21" fill="#fff"/>
 <circle cx="340" cy="12.5" r="5.5" fill="none" stroke="#2f6fd6" stroke-width="3.5" stroke-dasharray="2.2 1.6"/>
 <circle cx="340" cy="12.5" r="4" fill="#2f6fd6"/><circle cx="340" cy="12.5" r="1.8" fill="#fff"/>
 <path d="M418 12l2 2 2-2" fill="none" stroke="#ccc" stroke-width="0.8"/>
 <path d="M428 10l10-6 8 2-6 3 4 1-6 3 3 2-6 2-2 4-2-4z" fill="#e0e3e8"/>
 <path d="M455 9h7M455 12h7l-3.5 4z" stroke="#e8eaee" fill="#e8eaee" stroke-width="1.2"/>
</svg>
<div class="t" style="left:349px;top:5px;color:#111;font-size:12.5px;line-height:15px">Ribbon Full</div>
<div class="t" style="left:724px;top:6px;font-size:12px;line-height:15px;color:#e4e6ea">AViCAD 2024 Professional - [Drawing1.dwg*]</div>
<!-- menu -->
<div class="t" style="left:53px;top:30px">File</div>
<div class="t" style="left:84px;top:30px">Edit</div>
<div class="t" style="left:118px;top:30px">View</div>
<div class="t" style="left:157px;top:30px">Insert</div>
<div class="t" style="left:200px;top:30px">Format</div>
<div class="t" style="left:251px;top:30px">Tools</div>
<div class="t" style="left:292px;top:30px">Draw</div>
<div class="t" style="left:332px;top:30px">Dimension</div>
<div class="t" style="left:401px;top:30px">Modify</div>
<div class="t" style="left:452px;top:30px">Image</div>
<div class="t" style="left:498px;top:30px">Add-On</div>
<div class="t" style="left:554px;top:30px">Express</div>
<div class="t" style="left:607px;top:30px">EasyArch3D</div>
<div class="t" style="left:681px;top:30px">Window</div>
<div class="t" style="left:737px;top:30px">Help</div>
<div class="t" style="left:776px;top:30px">Mech-Q</div>
<!-- tabs -->
<div class="a" style="left:689px;top:49px;width:59px;height:21px;background:#4a5568"></div>
<div class="t" style="left:7px;top:53px">Home</div>
<div class="t" style="left:53px;top:53px">2D Draw</div>
<div class="t" style="left:113px;top:53px">Insert</div>
<div class="t" style="left:158px;top:53px">Annotate</div>
<div class="t" style="left:222px;top:53px">Layout</div>
<div class="t" style="left:272px;top:53px">3D Tools</div>
<div class="t" style="left:331px;top:53px">View</div>
<div class="t" style="left:372px;top:53px">Developer</div>
<div class="t" style="left:441px;top:53px">Settings</div>
<div class="t" style="left:500px;top:53px">Output</div>
<div class="t" style="left:553px;top:53px">Add-On</div>
<div class="t" style="left:611px;top:53px;letter-spacing:-0.3px">Express Tools</div>
<div class="t" style="left:697px;top:53px">Mech-Q</div>
<div class="t" style="left:756px;top:53px">EasyArch3D</div>
<div class="t" style="left:834px;top:53px;letter-spacing:-0.5px">EasyArch Extras</div>
<div class="t" style="left:931px;top:53px">Help</div>
<!--/TITLE-->
<!--RIBBON-->
<svg class="a" style="left:0;top:70px" width="1133" height="100">
<defs>
 <linearGradient id="lb" x1="0" y1="0" x2="0" y2="1"><stop offset="0" stop-color="#e2f2fc"/><stop offset="1" stop-color="#6fb4de"/></linearGradient>
</defs>
<g transform="translate(0,-70)">
 <!-- Pipe and Fitting -->
 <path d="M21.5 76.5h12v10h13v15h-33v-15h8z" fill="url(#lb)" stroke="#141414" stroke-width="2"/>
 <path d="M28 77v15M15 93.5h31" stroke="#d4892c" stroke-width="1.6"/>
 <!-- small icons left column -->
 <path d="M65 86l13-11" stroke="#151515" stroke-width="1"/><path d="M71.5 75v13" stroke="#d4892c" stroke-width="1.5"/><circle cx="71.5" cy="81.5" r="2.6" fill="#9fd0ee" stroke="#151515" stroke-width=".6"/>
 <text x="70" y="91.5" font-size="7" fill="#151515" font-family="Liberation Sans" textLength="11" lengthAdjust="spacingAndGlyphs">ISO</text>
 <text x="64.5" y="105.5" font-size="8" fill="#151515" font-family="Liberation Sans" textLength="16.5" lengthAdjust="spacingAndGlyphs">P&amp;ID</text>
 <path d="M67.5 107l5.5 3.5-5.5 3.5zM78.5 107l-5.5 3.5 5.5 3.5z" fill="#9fd0ee" stroke="#151515" stroke-width=".6"/><path d="M65.5 106v9M80.5 106v9" stroke="#d4892c" stroke-width="1.3"/>
 <text x="64.5" y="128.6" font-size="8.5" fill="#151515" font-family="Liberation Sans" textLength="16.5" lengthAdjust="spacingAndGlyphs">PLUM</text>
 <rect x="65.5" y="128.5" width="15" height="7" fill="url(#lb)" stroke="#222"/>
 <!-- grid -->
 <rect x="193" y="78" width="15" height="9" rx="3" fill="url(#lb)" stroke="#222"/><path d="M197 80v9M204 80v9" stroke="#d4892c" stroke-width="1.2"/><path d="M193 89h15" stroke="#222"/>
 <path d="M192.5 100l8-4 8 4v8h-16z" fill="url(#lb)" stroke="#222"/><path d="M193 101h15" stroke="#333"/>
 <circle cx="199" cy="127" r="6" fill="none" stroke="#6fb4de" stroke-width="1.8"/><path d="M196 127h6M199 124v6" stroke="#d4892c" stroke-width="1.5"/><path d="M198 120l4 1-2 2" fill="none" stroke="#ddd"/>
 <path d="M214.5 97v28" stroke="#8a909a"/>
 <path d="M224 77h7l-2 15h-5zM232 77h7v15h-8z" fill="url(#lb)" stroke="#222"/><path d="M223 84.5h16" stroke="#d4892c" stroke-width="1.2"/>
 <circle cx="230.5" cy="105" r="7" fill="url(#lb)" stroke="#222"/><path d="M223 105h15" stroke="#d4892c" stroke-width="1.2"/>
 <rect x="223" y="123" width="15" height="4" fill="url(#lb)" stroke="#222" stroke-width=".8"/><path d="M223 125h15" stroke="#d4892c"/>
 <text x="222" y="138.5" font-size="10" fill="#1a1a1a" font-family="Liberation Sans" textLength="18" lengthAdjust="spacingAndGlyphs">abc</text>
 <path d="M252 77h11M252 89h11" stroke="#d4892c" stroke-width="1.2"/><path d="M257.5 77l5 6-5 6-5-6z" fill="none" stroke="#222" stroke-width="1.5"/><circle cx="257.5" cy="83" r="1.3" fill="#9fd0ee"/>
 <path d="M250 108v-4a7 7 0 0 1 14 0v4" fill="none" stroke="#222" stroke-width="1.5"/><circle cx="257" cy="104" r="1.3" fill="#9fd0ee"/><path d="M250 107v6M264 107v6" stroke="#d4892c" stroke-width="1.5"/>
 <path d="M252 127a5 5 0 1 1 10 0a5 5 0 1 1-10 0M257 132v6M251 138h12" fill="none" stroke="#222" stroke-width="1.3"/><path d="M250 124v6M264 124v6" stroke="#d4892c" stroke-width="1.3"/>
 <path d="M279 89v-6a4.5 4.5 0 0 1 9 0v6" fill="none" stroke="#222" stroke-width="1.5"/><circle cx="283.5" cy="81" r="1.3" fill="#9fd0ee"/><path d="M277 87h14M277 90h14" stroke="#d4892c" stroke-width="1.2"/>
 <path d="M277 98v6M281 98l6 5-6 4zM283 109l5-5 4 5z" fill="url(#lb)" stroke="#d4892c" stroke-width="1"/><path d="M283 113h8M287 113v2" stroke="#d4892c"/>
 <path d="M277 128l6-6 9 8-4 6z" fill="url(#lb)" stroke="#222"/><path d="M278 127l9 3v6" fill="none" stroke="#d4892c"/>
 <path d="M298.5 97v28" stroke="#5a616c"/>
 <path d="M309 79l25 26h-25z" fill="url(#lb)" stroke="#141414" stroke-width="2"/>
 <path d="M319 74l20 19" stroke="#141414" stroke-width="3.5"/><path d="M319 74l20 19" stroke="#555" stroke-width="1.2"/><path d="M334 95l8 1-1-8z" fill="#141414"/>
 <path d="M337 127h6l-3 3z" fill="#e6e8ec"/>
 <!-- HVAC duct -->
 <rect x="362" y="78" width="30" height="22" fill="url(#lb)"/>
 <path d="M361 74v31M392 74v31M361 78h31M361 100h31" stroke="#141414" stroke-width="2"/><path d="M361 89h31" stroke="#d4892c" stroke-width="1.5"/>
 <path d="M405 76a16 16 0 0 1 16 15h-6a10 10 0 0 0-10-9z" fill="url(#lb)" stroke="#222"/><path d="M405 79a12 12 0 0 1 13 12" fill="none" stroke="#d4892c"/>
 <path d="M433 88l15-6v5l-15 6z" fill="url(#lb)" stroke="#222"/><path d="M433 90l15-6" stroke="#d4892c"/>
 <path d="M462 76h5M464 78v10M462 89h4" stroke="#222"/><path d="M464 79v8" stroke="#d4892c" stroke-width="1.5"/><path d="M466 77l4-2" stroke="#bbb"/><circle cx="472" cy="75" r="2.5" fill="#9fd0ee"/>
 <path d="M406 98h6v-3h6v17h-6v-3h-6z" fill="url(#lb)" stroke="#222"/><path d="M417 96v16M405 104h12" stroke="#d4892c" stroke-width="1.2"/>
 <path d="M437 108l5-9 8 3-4 6z" fill="url(#lb)" stroke="#222"/><path d="M433 108h15M433 111h15M441 110l6-13" stroke="#d4892c" stroke-width="1.2"/>
 <path d="M460 96h3v6h-3zM465 96h2v6h-2zM469 96h2v6h-2zM473 97h2v5h-2z" fill="url(#lb)" stroke="#222" stroke-width=".6"/><path d="M470 107l6-4v8z" fill="url(#lb)" stroke="#222"/>
 <rect x="405" y="118" width="4" height="14" fill="url(#lb)" stroke="#222" stroke-width=".8"/><path d="M405 125h15M410 119l7 6-7 7" fill="none" stroke="#d4892c"/><circle cx="418" cy="125" r="2.5" fill="#9fd0ee"/>
 <rect x="433.5" y="118.5" width="14" height="14" fill="url(#lb)" stroke="#222"/><path d="M434 119l13 13M447 119l-13 13" stroke="#222"/><circle cx="440.5" cy="125.5" r="3" fill="#3b414e" stroke="#222"/>
 <!-- Structural -->
 <path d="M498.5 74.5h26v6h-8.5v18h8.5v6h-26v-6h8.5v-18h-8.5z" fill="url(#lb)" stroke="#141414" stroke-width="2"/><path d="M499 89h25" stroke="#d4892c" stroke-width="1.6"/>
 <path d="M541 77h6M543 77v10M541 87h6" stroke="#9fd0ee" stroke-width="2"/><path d="M545 85l9-5" stroke="#d4892c"/><text x="549" y="87" font-size="8" fill="#222" font-family="Liberation Sans">A</text>
 <path d="M569 76v13h14l-4-4h-3v-3h-3v-3h-3z" fill="url(#lb)" stroke="#222"/>
 <rect x="596.5" y="76.5" width="14" height="13" rx="1" fill="none" stroke="#9fd0ee" stroke-width="2.5"/><rect x="596" y="76" width="15" height="14" fill="none" stroke="#222" stroke-width=".8"/>
 <rect x="624" y="75" width="15" height="15" fill="url(#lb)" stroke="#222"/><path d="M631.5 80l3 3-3 3-3-3z" fill="#222"/>
 <path d="M652 77h14M652 80h14M654 80v9M664 80v9M651 86h16" stroke="#e6e8ec" stroke-width="1.5"/>
 <path d="M542 96h9v3h-6v9h6v3h-9z" fill="url(#lb)" stroke="#222"/><path d="M540 103h6" stroke="#d4892c"/>
 <path d="M570 96v15M581 96v15" stroke="#9fd0ee" stroke-width="2.5"/><path d="M571 100h9M571 104h9M571 108h9" stroke="#222"/>
 <path d="M597 96h4M599 96v15M597 111h4M606 96h4M608 96v15M606 111h4" stroke="#9fd0ee" stroke-width="2"/><path d="M600 103h7" stroke="#d4892c"/>
 <path d="M624 96h15v8l-7 7h-8z" fill="url(#lb)" stroke="#222"/>
 <path d="M653 111l3-6 5-3" fill="none" stroke="#d4892c" stroke-width="1.2"/><path d="M659 99l6 1-3 4z" fill="#9fd0ee"/>
 <path d="M542 118v16" stroke="#222" stroke-dasharray="1 1" stroke-width="2"/><path d="M545 123h10v3h-10z" fill="#9fd0ee"/><path d="M545 129h10M553 117v4" stroke="#d4892c"/>
 <path d="M569 133v-15h14" fill="none" stroke="#d4892c" stroke-width="1.2"/><path d="M571 131l9-10v4z" fill="url(#lb)"/>
 <path d="M597 118h4M599 118v15M597 133h4M606 118h4M608 118v15M606 133h4" stroke="#9fd0ee" stroke-width="2"/><path d="M600 125h7" stroke="#d4892c"/>
 <g fill="#9fd0ee"><circle cx="626" cy="120" r="2"/><circle cx="636" cy="120" r="2"/><circle cx="631" cy="125" r="2"/><circle cx="626" cy="130" r="2"/><circle cx="636" cy="130" r="2"/></g>
 <!-- Mechanical -->
 <path d="M707 75h10v9h12v11h-12v9h-10v-9h-11v-11h11z" fill="url(#lb)" stroke="#141414" stroke-width="2"/><path d="M697 89.5h32" stroke="#d4892c" stroke-width="1.5"/>
 <rect x="764" y="75" width="29" height="12" rx="3" fill="url(#lb)" stroke="#141414" stroke-width="2"/><path d="M772 76v10M785 76v10" stroke="#141414" stroke-width="1"/><rect x="771" y="87" width="14" height="17" fill="url(#lb)" stroke="#141414" stroke-width="2"/><path d="M772 95h12M772 99h12" stroke="#141414" stroke-width="1.2"/><path d="M777.5 73v33" stroke="#d4892c" stroke-width="1.5"/>
 <path d="M826 80v24h31v-24" fill="none" stroke="#141414" stroke-width="2.2"/><path d="M829 79l12 12 12-12" fill="none" stroke="#141414" stroke-width="5"/><path d="M829 79l12 12 12-12" fill="none" stroke="#8fc8ea" stroke-width="2.6"/><path d="M829 100h25" stroke="#7fc0e6" stroke-width="2"/><path d="M829 77l11 11M854 77l-11 11" stroke="#d4892c" stroke-width="1.3"/>
 <path d="M710 127h6l-3 3z M774 127h6l-3 3z M863 126h6l-3 3z" fill="#e6e8ec"/>
 <!-- Management -->
 <path d="M892 102l16-16" stroke="#141414" stroke-width="6" stroke-linecap="round"/><path d="M892 102l16-16" stroke="#666" stroke-width="2" stroke-linecap="round"/>
 <path d="M906 88a8 8 0 0 1 6-14l-3 5 4 4 5-3a8 8 0 0 1-12 8z" fill="#2a2a2a" stroke="#141414" stroke-width="1.5"/>
 <rect x="940" y="75" width="13" height="10" fill="#dfe6ee" stroke="#333"/><path d="M941 79h11M941 82h11" stroke="#6a8fd0" stroke-width=".7"/><path d="M939 85l5-4 6 1-4 4z" fill="#9fd0ee" stroke="#333" stroke-width=".6"/>
 <text x="967" y="80" font-size="7" fill="#222" font-family="Liberation Sans" font-weight="bold">MQ</text><path d="M968 84h9" stroke="#9fd0ee" stroke-width="1.5"/><circle cx="979" cy="84" r="2" fill="none" stroke="#9fd0ee"/>
 <path d="M942 97h7l3 3v11h-10z" fill="#9fd0ee" stroke="#333" stroke-width=".8"/><path d="M944 102h6M944 104h6M944 106h6" stroke="#333" stroke-width=".7"/>
 <circle cx="974" cy="104" r="7" fill="none" stroke="#222" stroke-width="1.5"/><path d="M974 100v5" stroke="#d4892c" stroke-width="1.8"/><circle cx="974" cy="108" r=".9" fill="#d4892c"/>
 <text x="938" y="127" font-size="7" fill="#222" font-family="Liberation Sans" font-weight="bold">SCL</text><path d="M939 133l14-12" stroke="#d4892c"/>
 <circle cx="974" cy="125" r="7" fill="#6fb4de"/><text x="974" y="129" font-size="10" font-weight="bold" fill="#fff" text-anchor="middle" font-family="Liberation Sans">?</text>
 <!-- Utilities -->
 <circle cx="1013" cy="81" r="7.5" fill="#fff" stroke="#141414" stroke-width="2"/><path d="M1013 81v-7a7 7 0 0 1 7 7zM1013 81v7a7 7 0 0 1-7-7z" fill="#5aa9d8"/><path d="M1013 81h7M1013 81h-7M1013 74v14" stroke="#141414"/>
 <path d="M1024 73v14h13z" fill="#7fc0e6" stroke="#141414" stroke-width="1.5"/>
 <path d="M1006 97h20l10 -7M1006 97l5 5M1030 93l5 5" fill="none" stroke="#141414" stroke-width="2"/>
 <rect x="1056.5" y="76.5" width="29" height="25" fill="#f0f4f8" stroke="#141414" stroke-width="2"/><rect x="1057" y="77" width="28" height="4" fill="#8fc8ea"/>
 <path d="M1057 86h28M1057 91h28M1057 96h28M1066 81v20M1076 81v20" stroke="#c9d3dd" stroke-width="1"/>
 <path d="M1101 104l13-12" stroke="#d4892c" stroke-width="2.5"/><path d="M1100 105l2-7 5 5z" fill="#d4892c"/>
 <circle cx="1122" cy="84" r="10" fill="#fff" stroke="#141414" stroke-width="2"/><text x="1122" y="89" font-size="14" font-weight="bold" fill="#141414" text-anchor="middle" font-family="Liberation Sans">1</text>
 <path d="M1017 127h6l-3 3z M1068 127h6l-3 3z M1113 127h6l-3 3z" fill="#e6e8ec"/>
</g>
</svg>
<div class="t" style="left:8px;top:110px">Pipe and</div>
<div class="t" style="left:14px;top:125px">Fitting</div>
<div class="t" style="left:86px;top:77px">Pipe Isometric</div>
<div class="t" style="left:86px;top:100px">P and ID</div>
<div class="t" style="left:86px;top:123px">Plumbing Symbols</div>
<div class="t" style="left:307px;top:110px">Piping</div>
<div class="t" style="left:307px;top:125px">Tools</div>
<div class="t" style="left:362px;top:110px">HVAC</div>
<div class="t" style="left:364px;top:125px">Duct</div>
<div class="t" style="left:493px;top:110px">Shapes</div>
<div class="t" style="left:684px;top:110px">Mechanical</div>
<div class="t" style="left:754px;top:110px">Fasteners</div>
<div class="t" style="left:820px;top:110px">Material</div>
<div class="t" style="left:813px;top:125px">Handling</div>
<div class="t" style="left:887px;top:110px">Mech-Q</div>
<div class="t" style="left:897px;top:125px">CFG</div>
<div class="t" style="left:1000px;top:110px">Symbols</div>
<div class="t" style="left:1058px;top:110px">Tools</div>
<div class="t" style="left:1104px;top:110px">BOM</div>
<div class="t" style="left:159px;top:153px">Piping</div>
<div class="t" style="left:381px;top:153px">HVAC Ducting</div>
<div class="t" style="left:555px;top:153px">Structural</div>
<div class="t" style="left:747px;top:153px">Mechanical</div>
<div class="t" style="left:900px;top:153px">Management</div>
<div class="t" style="left:1047px;top:153px">Utilities</div>
<!--/RIBBON-->
<!--CHROME-->
<!-- doc tab -->
<div class="a" style="left:0;top:170px;width:109px;height:21px;background:#3b414e;border-radius:2px 2px 0 0"></div>
<div class="t" style="left:2px;top:174px;font-size:12px;color:#e8eaee">Drawing1*</div>
<svg class="a" style="left:90px;top:172px" width="45" height="16"><path d="M4.5 3.5l8 8M12.5 3.5l-8 8" stroke="#c8ccd2" stroke-width="1.3"/><path d="M28 8h10M33 3v10" stroke="#f0f2f4" stroke-width="1.6"/></svg>
<!-- command -->
<div class="a" style="left:0;top:770px;width:19px;height:40px;background:#1f2530"></div>
<svg class="a" style="left:0;top:770px" width="19" height="20"><path d="M1 8h9l-4.5 5z" fill="#fff"/></svg>
<div class="a" style="left:19px;top:782px;width:1114px;height:1px;background:#8e8e8e"></div>
<div class="t" style="left:21px;top:789px;font-family:'Liberation Mono',monospace;font-size:19.5px;line-height:20px;color:#111">Command:</div>
<!-- status -->
<div class="t" style="left:1px;top:816px;font-size:11px;color:#e8eaee">Ready</div>
<div class="a" style="left:0;top:834px;width:1133px;height:3px;background:#3c424c"></div>
<div class="a" style="left:506px;top:811px;width:1px;height:23px;background:#5a606a"></div>
<div class="a" style="left:512px;top:811px;width:1px;height:23px;background:#5a606a"></div>
<div class="a" style="left:682px;top:811px;width:1px;height:23px;background:#3e444e"></div>
<svg class="a" style="left:0;top:810px" width="1133" height="25">
 <path d="M515 17h14M522 10v14" stroke="#e8302a" stroke-width="2.4"/>
 <g fill="#e8eaee">
  <path d="M696 4.5L699 13L705 21.5L696 18L687 21.5L693 13Z"/>
 </g>
 <rect x="729" y="0" width="25" height="24" fill="#6e8cbc"/>
 <rect x="840" y="0" width="23" height="24" fill="#6e8cbc"/>
 <rect x="921" y="0" width="24" height="24" fill="#6e8cbc"/>
 <rect x="950" y="0" width="24" height="24" fill="#6e8cbc"/>
 <g fill="#f4f4f4">
  <path d="M740 5.5L743 14L749 22.5L740 19L731 22.5L737 14Z"/><circle cx="748.5" cy="6.5" r="4"/>
  <path d="M768 5.5L771 14L777 22.5L768 19L759 22.5L765 14Z"/>
 </g>
 <path d="M776 2l-2 4h3l-2 4" stroke="#f4f4f4" stroke-width="1.3" fill="none"/>
 <g fill="#c8cace"><circle cx="789" cy="6" r="1.4"/><circle cx="795.5" cy="6" r="1.4"/><circle cx="802" cy="6" r="1.4"/><circle cx="789" cy="12.5" r="1.4"/><circle cx="795.5" cy="12.5" r="1.4"/><circle cx="802" cy="12.5" r="1.4"/><circle cx="789" cy="19" r="1.4"/><circle cx="795.5" cy="19" r="1.4"/><circle cx="802" cy="19" r="1.4"/></g><path d="M683.5 1v23M726.5 1v23M755.5 1v23M781.5 1v23M810.5 1v23M837.5 1v23M865.5 1v23M891.5 1v23M918.5 1v23M947.5 1v23" stroke="#3e444e"/>
 <path d="M814 5h21M814 10h21M814 15h21M814 20h21M818 2v21M823 2v21M828 2v21M833 2v21" stroke="#f4f4f4" stroke-width="1.8"/>
 <path d="M843 8h6M846 5v6" stroke="#fff" stroke-width="1.6"/><rect x="843" y="13" width="17" height="7" fill="#fff"/><rect x="845" y="15" width="5" height="3" fill="#6e8cbc"/>
 <path d="M870 20h14v-13M878 20v-6h6" fill="none" stroke="#f4f4f4" stroke-width="2"/>
 <circle cx="905" cy="13" r="8" fill="none" stroke="#f4f4f4" stroke-width="2.5"/><path d="M905 13l10-10" stroke="#f4f4f4" stroke-width="2.2"/>
 <rect x="925" y="5" width="15" height="16" fill="none" stroke="#fff" stroke-width="2.4"/><rect x="936" y="2" width="6" height="6" fill="#6e8cbc" stroke="#fff" stroke-width="1.3"/>
 <path d="M953 6l13 11M956 18h15" stroke="#fff" stroke-width="2.2"/>
 <path d="M979 3.5h19" stroke="#f4f4f4" stroke-width="1.5"/><path d="M979 8.5h19" stroke="#f4f4f4" stroke-width="2.5"/><rect x="979" y="12.5" width="19" height="5" fill="#f4f4f4"/><rect x="979" y="19.5" width="19" height="5" fill="#f4f4f4"/><path d="M974.5 1v23M1001.5 1v23M1045.5 1v23M1072.5 1v23M1099.5 1v23" stroke="#3a404a"/>
 <circle cx="1058.5" cy="13" r="8.2" fill="none" stroke="#f4f4f4" stroke-width="3.6" stroke-dasharray="3.2 3.24"/><circle cx="1058.5" cy="13" r="6" fill="none" stroke="#f4f4f4" stroke-width="3"/><circle cx="1058.5" cy="13" r="2.6" fill="none" stroke="#f4f4f4" stroke-width="1.6"/>
 <path d="M1077 4h9v9h-9zM1077 23l9-10 9 10z" fill="#f4f4f4"/><circle cx="1091" cy="9" r="5" fill="#f4f4f4"/>
 <circle cx="1113" cy="8.5" r="3.8" fill="none" stroke="#f4f4f4" stroke-width="2.4"/><path d="M1110 12.5l-1.5 10 4.5-4 4.5 4-1.5-10z" fill="#f4f4f4"/>
 <path d="M1125 2v22" stroke="#5a606a"/>
</svg>
<div class="t" style="left:540px;top:817px;font-size:12px;color:#e8eaee">2'-7 7/16",-1'-2 7/16",0"</div>
<div class="t" style="left:711px;top:817px;font-size:11px;color:#e8eaee">1:1</div>
<div class="t" style="left:1005px;top:817px;font-size:11px;color:#e8eaee">MODEL</div>
<!--/CHROME-->
<div class="sep" style="left:350px"></div>
<div class="sep" style="left:484px"></div>
<div class="sep" style="left:675px"></div>
<div class="sep" style="left:877px"></div>
<div class="sep" style="left:990px"></div>
</body></html>
